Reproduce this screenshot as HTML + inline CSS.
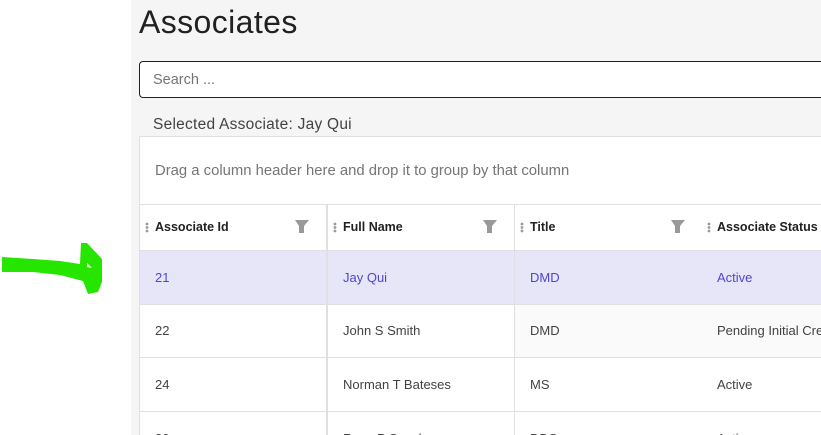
<!DOCTYPE html>
<html><head><meta charset="utf-8"><style>
html,body{margin:0;padding:0;width:821px;height:435px;overflow:hidden;background:#fff;font-family:"Liberation Sans",sans-serif}
#w{position:relative;width:821px;height:435px;overflow:hidden}
.a{position:absolute;white-space:nowrap}
.t{font-size:13px;color:#424242;line-height:16px}
.h{font-size:12.5px;font-weight:bold;color:#212121;line-height:16px}
.b{color:#4f46d0}
.l{position:absolute;background:#e0e0e0}
</style></head><body><div id="w">
<div class="a" style="left:131px;top:0;width:690px;height:435px;background:#f5f5f5"></div>
<div class="a" style="left:139px;top:3px;font-size:32px;line-height:38px;color:#212121;letter-spacing:.4px">Associates</div>
<div class="a" style="left:139px;top:61px;width:682px;height:35px;background:#fff;border:1px solid #212121;border-right:0;border-radius:4px 0 0 4px"></div>
<div class="a" style="left:153px;top:71px;font-size:14.5px;line-height:18px;color:#757575">Search ...</div>
<div class="a" style="left:153px;top:116px;font-size:15.5px;line-height:18px;color:#424242;letter-spacing:.25px">Selected Associate: Jay Qui</div>

<div class="a" style="left:139px;top:136px;width:682px;height:299px;background:#fff"></div>
<div class="l" style="left:139px;top:136px;width:682px;height:1px"></div>
<div class="l" style="left:139px;top:136px;width:1px;height:299px"></div>
<div class="a" style="left:155px;top:162px;font-size:14.85px;line-height:18px;color:#757575">Drag a column header here and drop it to group by that column</div>

<div class="a" style="left:140px;top:251px;width:681px;height:53px;background:#e7e6f8"></div>
<div class="a" style="left:515px;top:305px;width:306px;height:52px;background:#fafafa"></div>

<div class="l" style="left:140px;top:204px;width:681px;height:1px"></div>
<div class="l" style="left:140px;top:250px;width:681px;height:1px"></div>
<div class="l" style="left:140px;top:304px;width:681px;height:1px"></div>
<div class="l" style="left:140px;top:357px;width:681px;height:1px"></div>
<div class="l" style="left:140px;top:411px;width:681px;height:1px"></div>
<div class="l" style="left:326px;top:204px;width:2px;height:231px"></div>
<div class="l" style="left:514px;top:204px;width:1px;height:231px"></div>

<div class="a h" style="left:155px;top:219px">Associate Id</div>
<div class="a h" style="left:343px;top:219px">Full Name</div>
<div class="a h" style="left:530px;top:219px">Title</div>
<div class="a h" style="left:717px;top:219px">Associate Status</div>

<svg class="a" style="left:0;top:0" width="821" height="435" viewBox="0 0 821 435">
<g fill="#999">
<path d="M295 220h14l-5 6v7h-5v-7z"/>
<path d="M483 220h14l-5 6v7h-5v-7z"/>
<path d="M671 220h14l-5 6v7h-5v-7z"/>
<circle cx="147" cy="224" r="1.4"/><circle cx="147" cy="227.5" r="1.4"/><circle cx="147" cy="231" r="1.4"/>
<circle cx="335" cy="224" r="1.4"/><circle cx="335" cy="227.5" r="1.4"/><circle cx="335" cy="231" r="1.4"/>
<circle cx="522" cy="224" r="1.4"/><circle cx="522" cy="227.5" r="1.4"/><circle cx="522" cy="231" r="1.4"/>
<circle cx="709" cy="224" r="1.4"/><circle cx="709" cy="227.5" r="1.4"/><circle cx="709" cy="231" r="1.4"/>
</g>
<path fill="#26e600" fill-rule="evenodd" d="M2 257L33 259L60 261L80 264L81 243L87 243L102 259L102 282L98 292L88 294L83 281L60 275L33 272L2 272ZM87 263L92 268L87 267Z"/>
</svg>

<div class="a t b" style="left:155px;top:270px">21</div>
<div class="a t b" style="left:343px;top:270px">Jay Qui</div>
<div class="a t b" style="left:530px;top:270px">DMD</div>
<div class="a t b" style="left:717px;top:270px">Active</div>

<div class="a t" style="left:155px;top:323px">22</div>
<div class="a t" style="left:343px;top:323px">John S Smith</div>
<div class="a t" style="left:530px;top:323px">DMD</div>
<div class="a t" style="left:717px;top:323px">Pending Initial Credentialing</div>

<div class="a t" style="left:155px;top:377px">24</div>
<div class="a t" style="left:343px;top:377px">Norman T Bateses</div>
<div class="a t" style="left:530px;top:377px">MS</div>
<div class="a t" style="left:717px;top:377px">Active</div>

<div class="a t" style="left:155px;top:431px">30</div>
<div class="a t" style="left:343px;top:431px">Ryan P Sanchez</div>
<div class="a t" style="left:530px;top:431px">DDS</div>
<div class="a t" style="left:717px;top:431px">Active</div>
</div></body></html>
